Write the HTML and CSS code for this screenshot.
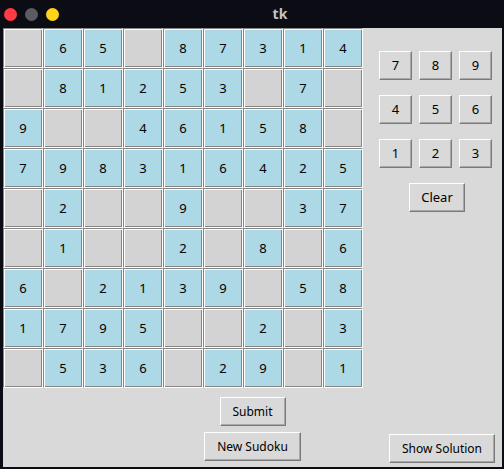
FILE: index.html
```html
<!DOCTYPE html>
<html>
<head>
<meta charset="utf-8">
<link rel="stylesheet" href="styles.css">
</head>
<body>
<div class="window">
  <div class="titlebar">
    <div class="lights">
      <span class="light red"></span>
      <span class="light gray"></span>
      <span class="light yellow"></span>
    </div>
    <div class="title">tk</div>
  </div>
  <div class="content">
    <div class="top">
      <div class="board">
        <div class="cell"></div><div class="cell given">6</div><div class="cell given">5</div><div class="cell"></div><div class="cell given">8</div><div class="cell given">7</div><div class="cell given">3</div><div class="cell given">1</div><div class="cell given">4</div>
        <div class="cell"></div><div class="cell given">8</div><div class="cell given">1</div><div class="cell given">2</div><div class="cell given">5</div><div class="cell given">3</div><div class="cell"></div><div class="cell given">7</div><div class="cell"></div>
        <div class="cell given">9</div><div class="cell"></div><div class="cell"></div><div class="cell given">4</div><div class="cell given">6</div><div class="cell given">1</div><div class="cell given">5</div><div class="cell given">8</div><div class="cell"></div>
        <div class="cell given">7</div><div class="cell given">9</div><div class="cell given">8</div><div class="cell given">3</div><div class="cell given">1</div><div class="cell given">6</div><div class="cell given">4</div><div class="cell given">2</div><div class="cell given">5</div>
        <div class="cell"></div><div class="cell given">2</div><div class="cell"></div><div class="cell"></div><div class="cell given">9</div><div class="cell"></div><div class="cell"></div><div class="cell given">3</div><div class="cell given">7</div>
        <div class="cell"></div><div class="cell given">1</div><div class="cell"></div><div class="cell"></div><div class="cell given">2</div><div class="cell"></div><div class="cell given">8</div><div class="cell"></div><div class="cell given">6</div>
        <div class="cell given">6</div><div class="cell"></div><div class="cell given">2</div><div class="cell given">1</div><div class="cell given">3</div><div class="cell given">9</div><div class="cell"></div><div class="cell given">5</div><div class="cell given">8</div>
        <div class="cell given">1</div><div class="cell given">7</div><div class="cell given">9</div><div class="cell given">5</div><div class="cell"></div><div class="cell"></div><div class="cell given">2</div><div class="cell"></div><div class="cell given">3</div>
        <div class="cell"></div><div class="cell given">5</div><div class="cell given">3</div><div class="cell given">6</div><div class="cell"></div><div class="cell given">2</div><div class="cell given">9</div><div class="cell"></div><div class="cell given">1</div>
      </div>
      <div class="keypad">
        <div class="btn key">7</div><div class="btn key">8</div><div class="btn key">9</div>
        <div class="btn key">4</div><div class="btn key">5</div><div class="btn key">6</div>
        <div class="btn key">1</div><div class="btn key">2</div><div class="btn key">3</div>
        <div class="btn clear">Clear</div>
      </div>
    </div>
    <div class="bottom">
      <div class="btn submit">Submit</div>
      <div class="bottom-row">
        <div class="spacer"></div>
        <div class="btn newgame">New Sudoku</div>
        <div class="btn solution">Show Solution</div>
      </div>
    </div>
  </div>
</div>
</body>
</html>
```
FILE: styles.css
```css
html, body {
  margin: 0;
  padding: 0;
}
body {
  width: 504px;
  height: 469px;
  overflow: hidden;
  font-family: "Noto Sans", "DejaVu Sans", sans-serif;
  color: #000;
}
.window {
  width: 504px;
  height: 469px;
  display: flex;
  flex-direction: column;
  background: #0c0d14;
}
.titlebar {
  height: 28px;
  flex: none;
  position: relative;
  display: flex;
  align-items: center;
}
.lights {
  display: flex;
  gap: 8px;
  margin-left: 4px;
}
.light {
  width: 13px;
  height: 13px;
  border-radius: 50%;
}
.red { background: #ff3b47; }
.gray { background: #5b5b61; }
.yellow { background: #ffd21f; }
.title {
  position: absolute;
  left: 0;
  right: 0;
  top: 0;
  height: 28px;
  line-height: 28px;
  text-align: center;
  padding-left: 56px;
  color: #c4c4c8;
  font-weight: bold;
  font-size: 14px;
}
.content {
  flex: 1;
  margin: 0 2px 2px 3px;
  background: #d9d9d9;
  display: flex;
  flex-direction: column;
}
.top {
  display: flex;
}
.board {
  display: grid;
  grid-template-columns: repeat(9, 40px);
  grid-template-rows: repeat(9, 40px);
  width: 360px;
}
.cell {
  box-sizing: border-box;
  background: #d3d3d3;
  border: 1px solid;
  border-color: #868686 #ffffff #ffffff #868686;
  box-shadow: inset 1px 1px 0 #ffffff, inset -1px -1px 0 #868686;
  display: flex;
  align-items: center;
  justify-content: center;
  font-size: 13px;
  padding-bottom: 1px;
}
.cell.given {
  background: #add8e6;
}
.btn {
  box-sizing: border-box;
  height: 29px;
  background: #d9d9d9;
  border: 1px solid;
  border-color: #ffffff #7a7a7a #7a7a7a #ffffff;
  box-shadow: inset -1px -1px 0 #a8a8a8;
  display: flex;
  align-items: center;
  justify-content: center;
  font-size: 12px;
  padding-bottom: 1px;
}
.keypad {
  display: grid;
  grid-template-columns: repeat(3, 33px);
  grid-auto-rows: 29px;
  column-gap: 7px;
  row-gap: 15px;
  margin-left: 16px;
  margin-top: 23px;
  align-self: start;
}
.key {
  font-size: 13px;
}
.clear {
  grid-column: 1 / span 3;
  justify-self: start;
  margin-left: 30px;
  width: 56px;
  font-size: 13px;
}
.bottom {
  display: flex;
  flex-direction: column;
}
.submit {
  width: 66px;
  margin-top: 9px;
  align-self: center;
}
.bottom-row {
  display: grid;
  grid-template-columns: 1fr auto 1fr;
  margin-top: 6px;
  align-items: start;
}
.newgame {
  width: 97px;
}
.solution {
  width: 106px;
  justify-self: end;
  margin-right: 7px;
  margin-top: 2px;
}
```
